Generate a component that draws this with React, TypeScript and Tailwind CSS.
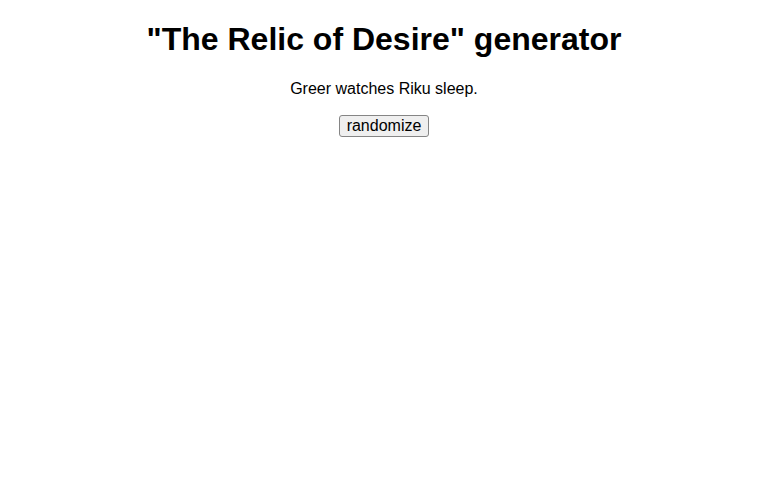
import React, { useState } from "react";

const names = ["Greer", "Riku", "Ansel", "Mara", "Tobin", "Ilse"];
const verbs = ["watches", "follows", "guards", "wakes"];
const acts = ["sleep", "dream", "wander", "rest"];

function pick<T>(a: T[]): T {
  return a[Math.floor(Math.random() * a.length)];
}

export default function App() {
  const [line, setLine] = useState("Greer watches Riku sleep.");
  const randomize = () => {
    const a = pick(names);
    let b = pick(names);
    while (b === a) b = pick(names);
    setLine(`${a} ${pick(verbs)} ${b} ${pick(acts)}.`);
  };
  return (
    <div className="min-h-screen bg-white text-center text-black font-['Liberation_Sans',Arial,sans-serif]">
      <div className="h-[21px]" />
      <h1 className="text-[32px] leading-[37px] font-bold">"The Relic of Desire" generator</h1>
      <p className="mt-[22px] text-[16px] leading-[18px]">{line}</p>
      <div className="mt-[16px]">
        <button
          onClick={randomize}
          className="h-[22px] px-[7px] text-[16px] leading-[18px] bg-[#efefef] border border-[#858585] rounded-[3px] text-black"
        >
          randomize
        </button>
      </div>
    </div>
  );
}
